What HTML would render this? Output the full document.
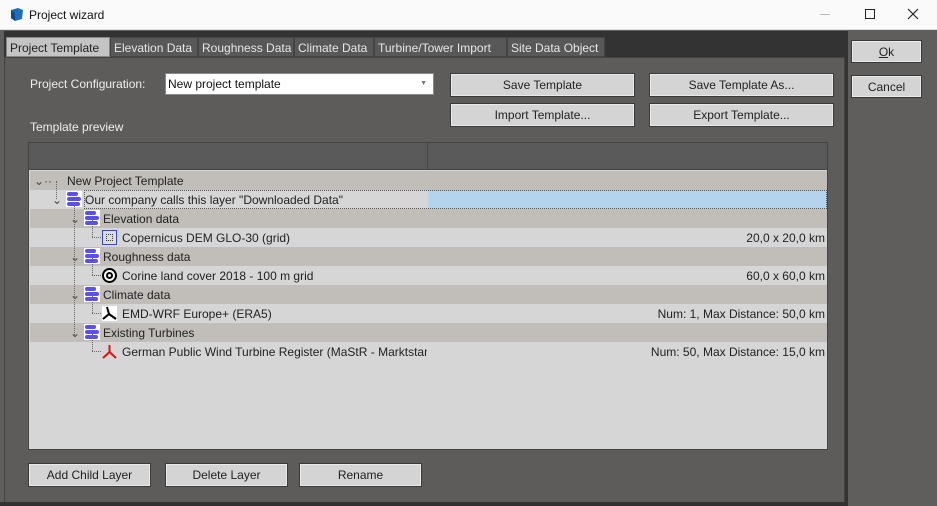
<!DOCTYPE html>
<html><head><meta charset="utf-8"><style>
*{margin:0;padding:0;box-sizing:border-box}
body{width:937px;height:506px;overflow:hidden;background:#5f5e5c;font-family:"Liberation Sans",sans-serif;font-size:12px;position:relative}
.a{position:absolute}
.title{left:0;top:0;width:937px;height:30px;background:#fafafa;border-bottom:1px solid #ddd}
.tab{top:37px;height:20px;background:#585858;color:#e6e6e6;line-height:20px;padding-left:3px;border:1px solid #444;font-size:12px;white-space:nowrap;overflow:hidden}
.btn{background:#d4d4d4;border:1px solid #3a3a3a;box-shadow:inset 0 0 0 1px #eaeaea;text-align:center;color:#222;line-height:22px;font-size:12px}
.row{left:30px;width:797px;height:19px;line-height:21px;color:#222}
.d{background:#c1bdb9}.l{background:#d6d6d6}
.t{position:absolute;top:0;white-space:nowrap}
.r{position:absolute;right:2px;top:0}
.stk{position:absolute;width:16px;height:16px;background:#fff;top:1px}
.stk i{position:absolute;left:1px;height:4px;background:#5a4ef5;border-radius:2px}
.vl{position:absolute;border-left:1px dotted #666}
.hl{position:absolute;border-top:1px dotted #666}
</style></head><body>
<div class="a title"></div>
<svg class="a" style="left:9px;top:7px" width="15" height="15"><path d="M2 3 L9 1 L14 3 L13 12 L6 14 L2 11Z" fill="#1d6fb8"/><path d="M2 3 L6 6 L6 14 L2 11Z" fill="#0d4a86"/></svg>
<div class="a" style="left:29px;top:8px;font-size:12px;color:#111">Project wizard</div>
<div class="a" style="left:820px;top:14px;width:10px;height:1px;background:#bbb"></div>
<div class="a" style="left:865px;top:9px;width:10px;height:10px;border:1px solid #222"></div>
<svg class="a" style="left:907px;top:8px" width="12" height="12"><path d="M1 1L11 11M11 1L1 11" stroke="#222" stroke-width="1.2"/></svg>
<div class="a" style="left:4px;top:31px;width:841px;height:26px;background:#333"></div>
<div class="a" style="left:845px;top:31px;width:3px;height:475px;background:#333"></div>
<div class="a" style="left:4px;top:57px;width:841px;height:446px;background:#5d5c5a;border:1px solid #444"></div>
<div class="a" style="left:0;top:502px;width:848px;height:4px;background:#333"></div>
<div class="a tab" style="left:6px;width:104px;background:#c4c4c4;color:#222;border-color:#888">Project Template</div>
<div class="a tab" style="left:110px;width:88px">Elevation Data</div>
<div class="a tab" style="left:198px;width:96px">Roughness Data</div>
<div class="a tab" style="left:294px;width:80px">Climate Data</div>
<div class="a tab" style="left:374px;width:133px">Turbine/Tower Import</div>
<div class="a tab" style="left:507px;width:98px">Site Data Object</div>
<div class="a" style="left:30px;top:77px;color:#eee">Project Configuration:</div>
<div class="a" style="left:165px;top:73px;width:269px;height:22px;background:#fff;border:1px solid #888;line-height:20px;padding-left:2px;color:#111">New project template<span style="position:absolute;right:6px;top:0;font-size:7px;color:#777">▼</span></div>
<div class="a btn" style="left:450px;top:73px;width:185px;height:24px">Save Template</div>
<div class="a btn" style="left:649px;top:73px;width:185px;height:24px">Save Template As...</div>
<div class="a btn" style="left:450px;top:103px;width:185px;height:24px">Import Template...</div>
<div class="a btn" style="left:649px;top:103px;width:185px;height:24px">Export Template...</div>
<div class="a" style="left:30px;top:120px;color:#eee">Template preview</div>
<div class="a btn" style="left:851px;top:40px;width:71px;height:23px"><u>O</u>k</div>
<div class="a btn" style="left:851px;top:75px;width:71px;height:23px">Cancel</div>
<div class="a" style="left:28px;top:142px;width:800px;height:308px;background:#d6d6d6;border:1px solid #444"></div>
<div class="a" style="left:29px;top:143px;width:798px;height:27px;background:#5a5a5a;border-bottom:1px solid #444"></div>
<div class="a" style="left:427px;top:143px;width:1px;height:27px;background:#444"></div>
<div class="a row d" style="top:171px"><span class="t" style="left:4px;color:#444">⌄··</span><span class="t" style="left:37px">New Project Template</span></div>
<div class="a row l" style="top:190px"><div style="position:absolute;left:398px;top:0;width:399px;height:19px;background:#b4d3ec"></div><div style="position:absolute;left:54px;top:0;width:743px;height:19px;border:1px dotted #555"></div><span class="t" style="left:22px;color:#444">⌄</span><div class="stk" style="left:36px"><i style="top:1px;width:11px"></i><i style="top:6px;width:14px"></i><i style="top:11px;width:13px"></i></div><span class="t" style="left:55px">Our company calls this layer "Downloaded Data"</span></div>
<div class="a row d" style="top:209px"><span class="t" style="left:40px;color:#444">⌄</span><div class="stk" style="left:54px"><i style="top:1px;width:11px"></i><i style="top:6px;width:14px"></i><i style="top:11px;width:13px"></i></div><span class="t" style="left:73px">Elevation data</span></div>
<div class="a row l" style="top:228px"><div style="position:absolute;left:72px;top:2px;width:15px;height:15px;border:1px solid #3344ee;background:#ddd"><div style="margin:3px;width:7px;height:7px;border:1px dotted #333"></div></div><span class="t" style="left:92px">Copernicus DEM GLO-30 (grid)</span><span class="r">20,0 x 20,0 km</span></div>
<div class="a row d" style="top:247px"><span class="t" style="left:40px;color:#444">⌄</span><div class="stk" style="left:54px"><i style="top:1px;width:11px"></i><i style="top:6px;width:14px"></i><i style="top:11px;width:13px"></i></div><span class="t" style="left:73px">Roughness data</span></div>
<div class="a row l" style="top:266px"><div style="position:absolute;left:72px;top:2px;width:15px;height:15px;border-radius:50%;border:2px solid #000;background:#fff"><div style="margin:2px;width:7px;height:7px;border-radius:50%;border:2px solid #000"></div></div><span class="t" style="left:92px">Corine land cover 2018 - 100 m grid</span><span class="r">60,0 x 60,0 km</span></div>
<div class="a row d" style="top:285px"><span class="t" style="left:40px;color:#444">⌄</span><div class="stk" style="left:54px"><i style="top:1px;width:11px"></i><i style="top:6px;width:14px"></i><i style="top:11px;width:13px"></i></div><span class="t" style="left:73px">Climate data</span></div>
<div class="a row l" style="top:304px"><svg style="position:absolute;left:72px;top:2px" width="15" height="15"><rect width="15" height="15" fill="#fff"/><path d="M7 8L5 1M7 8L14 13M7 8L1 13" stroke="#000" stroke-width="2"/></svg><span class="t" style="left:92px">EMD-WRF Europe+ (ERA5)</span><span class="r">Num: 1, Max Distance: 50,0 km</span></div>
<div class="a row d" style="top:323px"><span class="t" style="left:40px;color:#444">⌄</span><div class="stk" style="left:54px"><i style="top:1px;width:11px"></i><i style="top:6px;width:14px"></i><i style="top:11px;width:13px"></i></div><span class="t" style="left:73px">Existing Turbines</span></div>
<div class="a row l" style="top:342px"><svg style="position:absolute;left:72px;top:2px" width="15" height="15"><path d="M7.5 1V8M7.5 8L1 14M7.5 8L14 14" stroke="#e41010" stroke-width="2" fill="none"/></svg><span class="t" style="left:92px;width:305px;overflow:hidden">German Public Wind Turbine Register (MaStR - Marktstammdatenregister)</span><span class="r">Num: 50, Max Distance: 15,0 km</span></div>
<div class="a vl" style="left:56px;top:181px;height:18px"></div>
<div class="a vl" style="left:74px;top:200px;height:137px"></div>
<div class="a vl" style="left:92px;top:219px;height:18px"></div><div class="a hl" style="left:92px;top:237px;width:9px"></div>
<div class="a vl" style="left:92px;top:257px;height:18px"></div><div class="a hl" style="left:92px;top:275px;width:9px"></div>
<div class="a vl" style="left:92px;top:295px;height:18px"></div><div class="a hl" style="left:92px;top:313px;width:9px"></div>
<div class="a vl" style="left:92px;top:333px;height:18px"></div><div class="a hl" style="left:92px;top:351px;width:9px"></div>
<div class="a btn" style="left:28px;top:463px;width:123px;height:24px">Add Child Layer</div>
<div class="a btn" style="left:165px;top:463px;width:123px;height:24px">Delete Layer</div>
<div class="a btn" style="left:299px;top:463px;width:123px;height:24px">Rename</div>
</body></html>
